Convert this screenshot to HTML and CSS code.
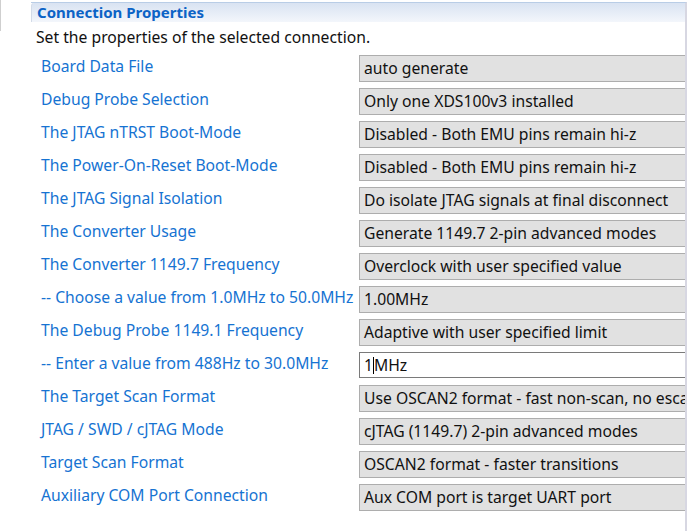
FILE: index.html
```html
<!DOCTYPE html>
<html>
<head>
<meta charset="utf-8">
<link rel="stylesheet" href="styles.css">
</head>
<body>
<div class="page">
  <div class="side"><div class="side-rule"></div></div>
  <div class="panel">
    <div class="panel-head">Connection Properties</div>
    <div class="panel-desc">Set the properties of the selected connection.</div>
    <div class="props">
      <div class="lbl">Board Data File</div><div class="fld">auto generate</div>
      <div class="lbl">Debug Probe Selection</div><div class="fld">Only one XDS100v3 installed</div>
      <div class="lbl">The JTAG nTRST Boot-Mode</div><div class="fld">Disabled - Both EMU pins remain hi-z</div>
      <div class="lbl">The Power-On-Reset Boot-Mode</div><div class="fld">Disabled - Both EMU pins remain hi-z</div>
      <div class="lbl">The JTAG Signal Isolation</div><div class="fld">Do isolate JTAG signals at final disconnect</div>
      <div class="lbl">The Converter Usage</div><div class="fld">Generate 1149.7 2-pin advanced modes</div>
      <div class="lbl">The Converter 1149.7 Frequency</div><div class="fld">Overclock with user specified value</div>
      <div class="lbl">-- Choose a value from 1.0MHz to 50.0MHz</div><div class="fld">1.00MHz</div>
      <div class="lbl">The Debug Probe 1149.1 Frequency</div><div class="fld">Adaptive with user specified limit</div>
      <div class="lbl">-- Enter a value from 488Hz to 30.0MHz</div><div class="fld fld-edit">1<span class="caret"></span>MHz</div>
      <div class="lbl">The Target Scan Format</div><div class="fld">Use OSCAN2 format - fast non-scan, no escape sequences</div>
      <div class="lbl">JTAG / SWD / cJTAG Mode</div><div class="fld">cJTAG (1149.7) 2-pin advanced modes</div>
      <div class="lbl">Target Scan Format</div><div class="fld">OSCAN2 format - faster transitions</div>
      <div class="lbl">Auxiliary COM Port Connection</div><div class="fld">Aux COM port is target UART port</div>
    </div>
  </div>
</div>
</body>
</html>
```

FILE: styles.css
```css
html, body {
  margin: 0;
  padding: 0;
  background: #ffffff;
}
body {
  font-family: "Noto Sans", "Open Sans", sans-serif;
  font-size: 15.7px;
  color: #111;
}
.page {
  display: flex;
  width: 689px;
  height: 531px;
  overflow: hidden;
}
.side {
  width: 31px;
  flex: none;
}
.side-rule {
  width: 1px;
  height: 31px;
  background: #cfcfcf;
}
.panel {
  margin-top: 2px;
  width: 654px;
  flex: none;
  border-top: 1px solid #b9cde6;
  border-right: 2px solid #d7d7e2;
  overflow: hidden;
}
.panel-head {
  height: 19px;
  line-height: 19px;
  padding-left: 5px;
  font-weight: bold;
  font-size: 15px;
  color: #0c63c6;
  border-left: 1px solid #d3dbe8;
  border-top-left-radius: 3px;
  background: linear-gradient(#d9e3f2, #f3f6fb);
}
.panel-desc {
  height: 33px;
  line-height: 31px;
  padding-left: 5px;
  color: #111;
}
.props {
  display: grid;
  grid-template-columns: 318px 360px;
  grid-auto-rows: 27px;
  row-gap: 6px;
  padding-left: 10px;
}
.lbl {
  color: #1673d2;
  line-height: 22px;
  white-space: nowrap;
}
.fld {
  box-sizing: border-box;
  background: #e1e1e1;
  border: 1px solid #adadad;
  line-height: 25px;
  padding-left: 4px;
  white-space: nowrap;
  overflow: hidden;
  color: #111;
}
.fld-edit {
  background: #ffffff;
  border-color: #7a7a7a;
  height: 26px;
  line-height: 24px;
}
.caret {
  display: inline-block;
  width: 1px;
  height: 17px;
  background: #000;
  vertical-align: -3px;
}
```
